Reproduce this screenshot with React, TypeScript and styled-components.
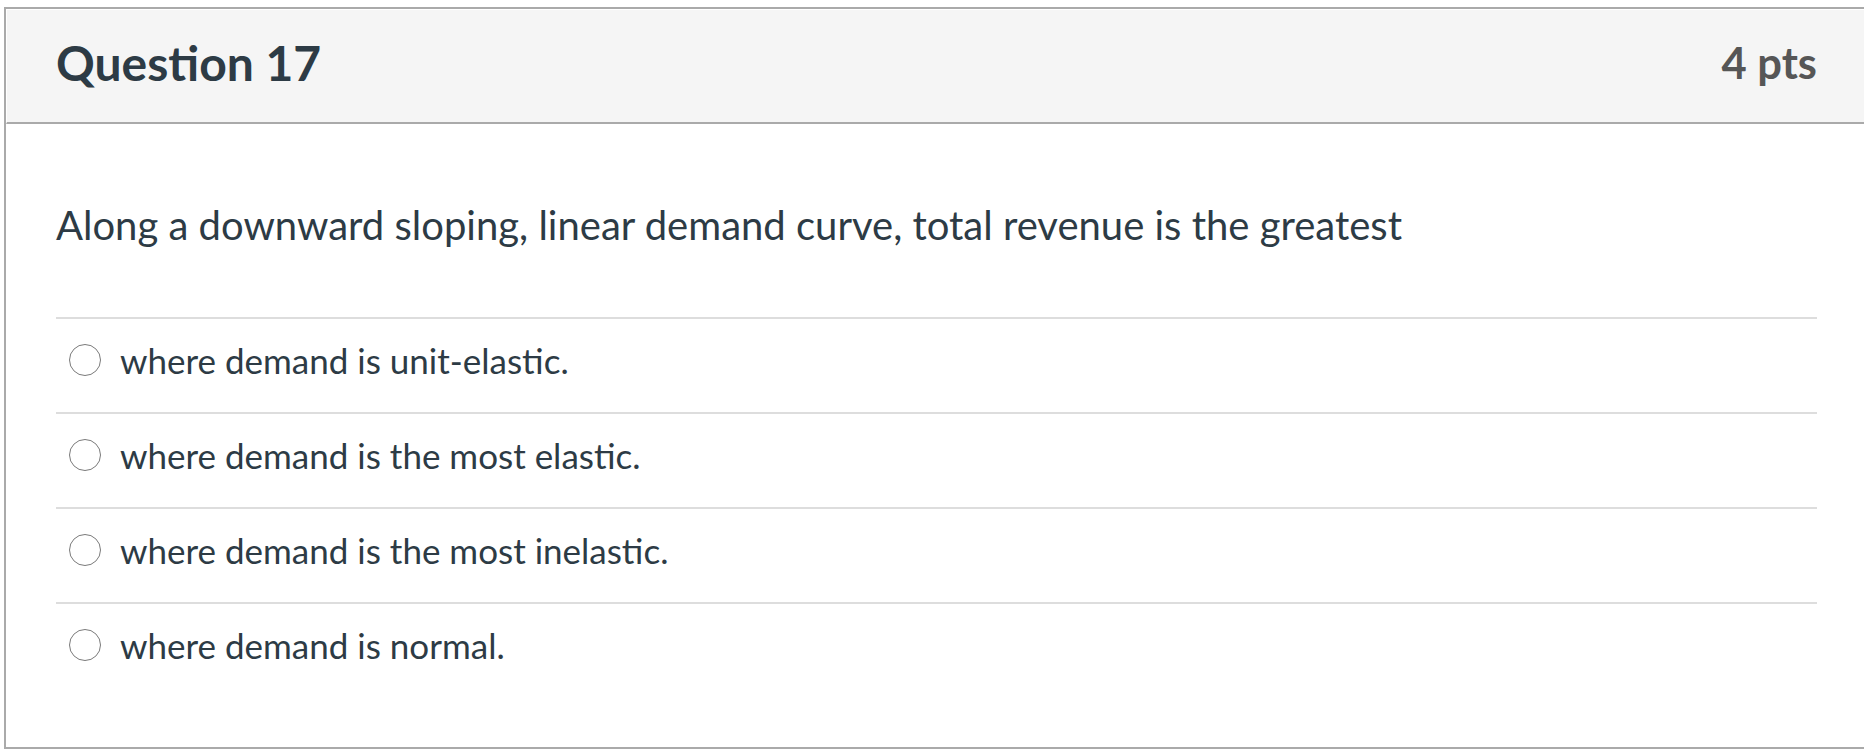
import React from "react";
import styled, { createGlobalStyle } from "styled-components";

const Global = createGlobalStyle`
  html, body { margin: 0; padding: 0; background: #ffffff; }
  body { font-family: Lato, "Open Sans", "Liberation Sans", sans-serif; color: #2d3b45; overflow: hidden; }
`;

const Card = styled.section`
  margin: 7px 0 0 4px;
  border: 2px solid #aaaaaa;
  border-right: none;
  height: 742px;
  box-sizing: border-box;
  display: flex;
  flex-direction: column;
`;

const Header = styled.header`
  height: 115px;
  box-sizing: border-box;
  background: #f5f5f5;
  border-top: 1px solid #ffffff;
  border-left: 1px solid #ffffff;
  border-bottom: 2px solid #aaaaaa;
  display: flex;
  align-items: center;
  justify-content: space-between;
  padding: 0 47px 6px 49px;
`;

const Title = styled.h2`
  margin: 0;
  font-size: 48px;
  font-weight: 700;
  color: #2d3b45;
  line-height: 1;
`;

const Points = styled.div`
  font-size: 43.5px;
  font-weight: 700;
  color: #565656;
  line-height: 1;
`;

const Body = styled.div`
  padding: 0 47px 0 50px;
`;

const Prompt = styled.p`
  margin: 0;
  padding: 77px 0 68px;
  font-size: 40px;
  line-height: 48px;
  color: #2d3b45;
`;

const Answers = styled.div`
  display: flex;
  flex-direction: column;
`;

const Answer = styled.label`
  display: flex;
  align-items: center;
  height: 95px;
  box-sizing: border-box;
  border-top: 2px solid #dddddd;
  padding: 0 0 11px 13px;
  gap: 19px;
`;

const Radio = styled.span`
  width: 32px;
  height: 32px;
  box-sizing: border-box;
  border-radius: 50%;
  border: 1.5px solid #7a7a7a;
  background: #ffffff;
  flex: none;
`;

const AnswerText = styled.span`
  font-size: 35px;
  color: #2d3b45;
  line-height: 1;
`;

const answers = [
  "where demand is unit-elastic.",
  "where demand is the most elastic.",
  "where demand is the most inelastic.",
  "where demand is normal.",
];

export default function App() {
  return (
    <>
      <Global />
      <Card>
        <Header>
          <Title>Question 17</Title>
          <Points>4 pts</Points>
        </Header>
        <Body>
          <Prompt>Along a downward sloping, linear demand curve, total revenue is the greatest</Prompt>
          <Answers>
            {answers.map((a) => (
              <Answer key={a}>
                <Radio />
                <AnswerText>{a}</AnswerText>
              </Answer>
            ))}
          </Answers>
        </Body>
      </Card>
    </>
  );
}
